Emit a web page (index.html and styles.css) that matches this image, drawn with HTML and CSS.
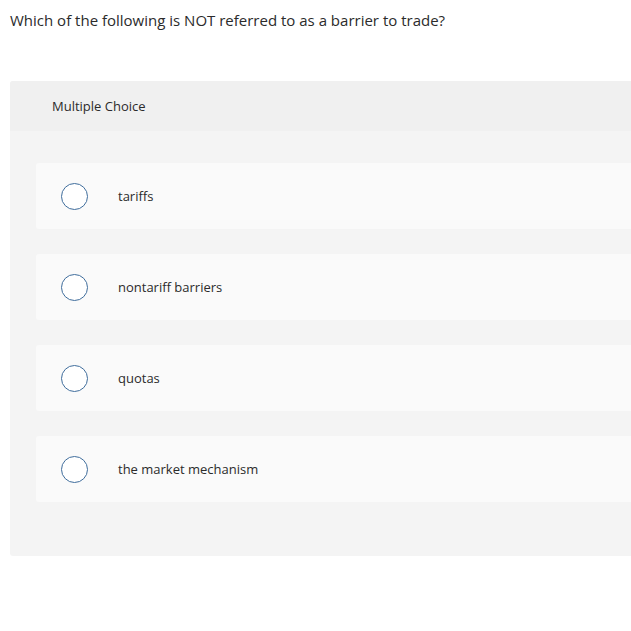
FILE: index.html
```html
<!DOCTYPE html>
<html>
<head>
<meta charset="utf-8">
<link rel="stylesheet" href="styles.css">
</head>
<body>
<p class="question">Which of the following is NOT referred to as a barrier to trade?</p>
<section class="panel">
  <div class="panel-head">Multiple Choice</div>
  <div class="panel-body">
    <label class="option"><span class="radio"></span><span class="opt-text">tariffs</span></label>
    <label class="option"><span class="radio"></span><span class="opt-text">nontariff barriers</span></label>
    <label class="option"><span class="radio"></span><span class="opt-text">quotas</span></label>
    <label class="option"><span class="radio"></span><span class="opt-text">the market mechanism</span></label>
  </div>
</section>
</body>
</html>
```
FILE: styles.css
```css
html, body {
  margin: 0;
  padding: 0;
  background: #ffffff;
}
body {
  font-family: "Open Sans", "Liberation Sans", sans-serif;
  color: #2b2b2b;
  width: 631px;
  overflow: hidden;
}
.question {
  margin: 0;
  padding: 10px 0 0 10px;
  font-size: 15px;
  line-height: 20px;
}
.panel {
  margin: 51px 0 0 10px;
  background: #f4f4f4;
  border-radius: 3px 0 0 3px;
}
.panel-head {
  background: #f0f0f0;
  height: 50px;
  display: flex;
  align-items: center;
  padding-left: 42px;
  font-size: 13px;
  color: #2b2b2b;
  border-radius: 3px 0 0 0;
}
.panel-body {
  display: flex;
  flex-direction: column;
  gap: 25px;
  padding: 32px 0 54px 26px;
}
.option {
  display: flex;
  align-items: center;
  height: 66px;
  background: #fafafa;
  border-radius: 3px 0 0 3px;
  padding-left: 25px;
}
.radio {
  width: 25px;
  height: 25px;
  border: 1.5px solid #3f6d9c;
  border-radius: 50%;
  background: #ffffff;
  flex: none;
}
.opt-text {
  margin-left: 30px;
  font-size: 13px;
  color: #2b2b2b;
}
```
